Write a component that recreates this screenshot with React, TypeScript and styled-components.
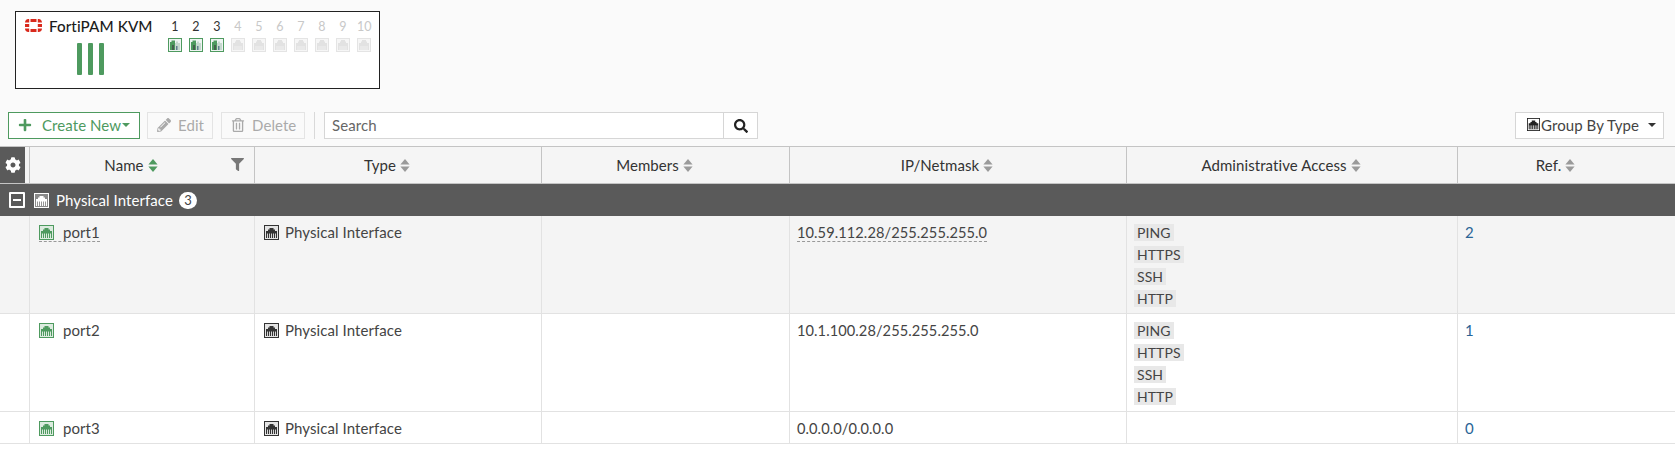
import { createGlobalStyle, styled } from 'styled-components';
import { FaCog, FaFilter, FaPencilAlt, FaPlus, FaSearch, FaRegTrashAlt } from 'react-icons/fa';

const GREEN = '#4e9a5f';

const GlobalStyle = createGlobalStyle`
  html, body {
    margin: 0;
    padding: 0;
    background: #fafafa;
    font-family: Lato, "Open Sans", sans-serif;
    font-size: 15px;
    letter-spacing: 0.08px;
    color: #444;
  }
`;

// rj45 jack in a square frame, frame and inner colours differ per place of use
const PortIcon = ({
  frame,
  fill = '#e4e4e4',
  jack,
  stripe = '#fff',
  size = 15,
}: {
  frame: string;
  fill?: string;
  jack: string;
  stripe?: string;
  size?: number;
}) => (
  <svg width={size} height={size} viewBox="0 0 15 15" style={{ flex: 'none', display: 'block' }}>
    <rect x="0.5" y="0.5" width="14" height="14" fill={fill} stroke={frame} />
    <path d="M2 13V6h2V4.5h1.5V3h4v1.5H11V6h2v7z" fill={jack} />
    <path d="M3.5 8.5V13M5.5 8.5V13M7.5 8.5V13M9.5 8.5V13M11.5 8.5V13" stroke={stripe} strokeWidth="0.8" />
  </svg>
);

const SwitchPort = ({ active }: { active: boolean }) => (
  <svg width="14" height="14" viewBox="0 0 14 14" style={{ display: 'block' }}>
    <rect x="0.5" y="0.5" width="13" height="13" fill={active ? '#eef4f2' : '#f6f6f6'} stroke={active ? GREEN : '#e4e4e4'} />
    {active ? (
      <>
        <path d="M2 12V4h1.5V2.5H7V12z" fill={GREEN} />
        <path d="M4 12V7h2v5z" fill="#44604c" />
        <path d="M7 12V5h1V3.5h2V5h2v7z" fill="#c6d8cf" />
        <path d="M8 12V8h1.5v4z" fill="#5f7f8c" />
      </>
    ) : (
      <>
        <path d="M2 12V5h2V3.5h1V2h4v1.5h1V5h2v7z" fill="#e2e2e2" />
        <path d="M4 8v4M6 8v4M8 8v4M10 8v4" stroke="#f6f6f6" strokeWidth="0.7" />
      </>
    )}
  </svg>
);

const FortinetLogo = () => (
  <svg width="17" height="13" viewBox="0 0 17 13" style={{ display: 'block', flex: 'none' }}>
    <g fill="#d9291c">
      <path d="M5.5 0h6v3h-6zM5.5 10h6v3h-6zM0 5h4.2v3H0zM12.8 5H17v3h-4.2z" />
      <path d="M0 3.6C0 1.5 1.4 0 3.4 0h.8v3.6zM17 3.6C17 1.5 15.6 0 13.6 0h-.8v3.6zM0 9.4C0 11.5 1.4 13 3.4 13h.8V9.4zM17 9.4c0 2.1-1.4 3.6-3.4 3.6h-.8V9.4z" />
    </g>
  </svg>
);

const SortIcon = ({ active }: { active?: boolean }) => (
  <svg width="10" height="13" viewBox="0 0 10 13" style={{ flex: 'none' }}>
    <path d="M5 0l4.6 5.4H.4z" fill={active ? GREEN : '#9a9a9a'} />
    <path d="M5 13L.4 7.6h9.2z" fill={active ? GREEN : '#9a9a9a'} />
  </svg>
);

const Page = styled.div`
  display: flex;
  flex-direction: column;
  width: 1675px;
  height: 450px;
  overflow: hidden;
  background: #fafafa;
`;

const Widget = styled.section`
  box-sizing: border-box;
  flex: none;
  display: flex;
  width: 365px;
  height: 78px;
  margin: 11px 0 0 15px;
  padding: 5px 0 0 9px;
  background: #fff;
  border: 1px solid #222;
`;

const WidgetLeft = styled.div`
  width: 143px;
`;

const WidgetTitle = styled.div`
  display: flex;
  align-items: center;
  gap: 7px;
  height: 17px;
  font-size: 15.2px;
  font-weight: 500;
  color: #1c1c1c;
  white-space: nowrap;
`;

const Bars = styled.div`
  display: flex;
  gap: 6px;
  margin: 9px 0 0 52px;
`;

const Bar = styled.div`
  width: 5px;
  height: 32px;
  border-radius: 1px;
  background: ${GREEN};
`;

const PortGrid = styled.div`
  display: grid;
  grid-template-columns: repeat(10, 14px);
  align-content: start;
  column-gap: 7px;
  row-gap: 4px;
  padding-top: 3px;
`;

const PortNumber = styled.div<{ $active: boolean }>`
  height: 14px;
  line-height: 14px;
  font-size: 12.5px;
  text-align: center;
  white-space: nowrap;
  color: ${p => (p.$active ? '#333' : '#c8c8c8')};
`;

const Toolbar = styled.div`
  flex: none;
  display: flex;
  align-items: stretch;
  height: 27px;
  margin: 23px 0 0 8px;
  padding-right: 11px;
`;

const ToolButton = styled.button<{ $width: number; $after?: number; $primary?: boolean }>`
  box-sizing: border-box;
  display: flex;
  align-items: center;
  gap: 7px;
  width: ${p => p.$width}px;
  height: 27px;
  margin-right: ${p => p.$after ?? 7}px;
  padding: 0 9px 2px;
  border: 1px solid ${p => (p.$primary ? GREEN : '#e4e4e4')};
  background: ${p => (p.$primary ? '#fff' : '#fafafa')};
  color: ${p => (p.$primary ? GREEN : '#aaa')};
  font-family: inherit;
  font-size: 15px;
  letter-spacing: inherit;
  white-space: nowrap;
`;

const Caret = styled.span`
  display: inline-block;
  flex: none;
  width: 0;
  height: 0;
  border-left: 4px solid transparent;
  border-right: 4px solid transparent;
  border-top: 4px solid currentColor;
`;

const CreateCaret = styled(Caret)`
  margin-left: -6px;
`;

const Separator = styled.div`
  width: 1px;
  margin: 0 9px 0 2px;
  background: #d9d9d9;
`;

const SearchBox = styled.div`
  box-sizing: border-box;
  display: flex;
  width: 434px;
  height: 27px;
  background: #fff;
  border: 1px solid #d6d6d6;
`;

const SearchInput = styled.div`
  flex: 1;
  padding-left: 7px;
  line-height: 25px;
  color: #666;
`;

const SearchButton = styled.div`
  display: flex;
  align-items: center;
  justify-content: center;
  width: 33px;
  border-left: 1px solid #d6d6d6;
  color: #222;
  font-size: 14px;
`;

const GroupBy = styled.div`
  box-sizing: border-box;
  display: flex;
  align-items: center;
  gap: 1px;
  width: 149px;
  height: 27px;
  margin-left: auto;
  padding: 0 0 2px 11px;
  background: #fff;
  border: 1px solid #d6d6d6;
  color: #444;
  white-space: nowrap;
`;

const GroupCaret = styled(Caret)`
  margin-left: 8px;
  color: #333;
`;

const Table = styled.div`
  flex: 1;
  margin-top: 7px;
  background: #fff;
  border-top: 1px solid #c4c4c4;
`;

const cols = '25px 4px 225px 287px 248px 337px 331px 1fr';

const HeaderRow = styled.div`
  box-sizing: border-box;
  display: grid;
  grid-template-columns: ${cols};
  height: 37px;
  background: #f5f5f5;
  border-bottom: 1px solid #c4c4c4;
`;

const GearCell = styled.div`
  display: flex;
  align-items: center;
  justify-content: center;
  background: #5a5a5a;
  color: #fff;
  font-size: 16px;
`;

const GapCell = styled.div`
  border-left: 1px solid transparent;
`;

const HeaderCell = styled.div`
  position: relative;
  box-sizing: border-box;
  display: flex;
  align-items: center;
  justify-content: center;
  gap: 4px;
  padding-right: 22px;
  border-left: 1px solid #c4c4c4;
  color: #333;
`;

const FilterIcon = styled.span`
  position: absolute;
  top: 11px;
  right: 10px;
  display: flex;
  color: #777;
  font-size: 13px;
`;

const GroupRow = styled.div`
  display: flex;
  align-items: center;
  height: 32px;
  padding-left: 9px;
  background: #5a5a5a;
  color: #fff;
`;

const Collapse = styled.span`
  box-sizing: border-box;
  display: flex;
  align-items: center;
  justify-content: center;
  width: 16px;
  height: 16px;
  margin-right: 9px;
  border: 2px solid #fff;
  border-radius: 1px;
  &::after {
    content: '';
    width: 8px;
    height: 2px;
    background: #fff;
  }
`;

const GroupLabel = styled.span`
  margin: 0 6px 0 7px;
`;

const CountBadge = styled.span`
  width: 18px;
  height: 17px;
  line-height: 17px;
  border-radius: 9px;
  background: #fff;
  color: #444;
  font-size: 13px;
  text-align: center;
`;

const Row = styled.div<{ $height: number; $selected?: boolean }>`
  box-sizing: border-box;
  display: grid;
  grid-template-columns: ${cols};
  height: ${p => p.$height}px;
  background: ${p => (p.$selected ? '#f4f4f4' : '#fff')};
  border-bottom: 1px solid #e2e2e2;
`;

const Cell = styled.div<{ $text?: boolean }>`
  box-sizing: border-box;
  padding: 8px 0 0 ${p => (p.$text ? 7 : 9)}px;
  border-left: 1px solid #e2e2e2;
  color: #444;
  line-height: 17px;
`;

const EmptyCell = styled.div``;

const CellLine = styled.span<{ $dashed?: boolean }>`
  display: inline-flex;
  align-items: center;
  gap: 9px;
  ${p => (p.$dashed ? 'border-bottom: 1px dashed #999;' : '')}
`;

const IpLine = styled(CellLine)`
  font-size: 14.6px;
`;

const TypeLine = styled.span`
  display: flex;
  align-items: center;
  gap: 6px;
`;

const Tags = styled.div`
  display: flex;
  flex-direction: column;
  align-items: flex-start;
  gap: 5px;
`;

const Tag = styled.span`
  padding: 0 3px;
  background: #e8e8e8;
  color: #444;
  font-size: 14px;
  line-height: 17px;
`;

const RefLink = styled.span`
  color: #2a6496;
`;

const headers = ['Type', 'Members', 'IP/Netmask', 'Administrative Access', 'Ref.'];
const ports = [
  { name: 'port1', ip: '10.59.112.28/255.255.255.0', refs: 2, height: 98, selected: true, tags: true },
  { name: 'port2', ip: '10.1.100.28/255.255.255.0', refs: 1, height: 98, tags: true },
  { name: 'port3', ip: '0.0.0.0/0.0.0.0', refs: 0, height: 32 },
];

export default function App() {
  return (
    <Page>
      <GlobalStyle />
      <Widget>
        <WidgetLeft>
          <WidgetTitle>
            <FortinetLogo />
            FortiPAM KVM
          </WidgetTitle>
          <Bars>
            <Bar />
            <Bar />
            <Bar />
          </Bars>
        </WidgetLeft>
        <PortGrid>
          {Array.from({ length: 10 }, (_, i) => (
            <PortNumber key={i} $active={i < 3}>
              {i + 1}
            </PortNumber>
          ))}
          {Array.from({ length: 10 }, (_, i) => (
            <SwitchPort key={i} active={i < 3} />
          ))}
        </PortGrid>
      </Widget>

      <Toolbar>
        <ToolButton $width={132} $primary>
          <FaPlus size={14} style={{ flex: 'none', marginRight: 3 }} />
          <span>Create New</span>
          <CreateCaret />
        </ToolButton>
        <ToolButton $width={66} $after={8}>
          <FaPencilAlt size={14} style={{ flex: 'none' }} />
          Edit
        </ToolButton>
        <ToolButton $width={84}>
          <FaRegTrashAlt size={14} style={{ flex: 'none' }} />
          Delete
        </ToolButton>
        <Separator />
        <SearchBox>
          <SearchInput>Search</SearchInput>
          <SearchButton>
            <FaSearch />
          </SearchButton>
        </SearchBox>
        <GroupBy>
          <PortIcon frame="#222" fill="#fff" jack="#222" size={13} />
          Group By Type
          <GroupCaret />
        </GroupBy>
      </Toolbar>

      <Table>
        <HeaderRow>
          <GearCell>
            <FaCog />
          </GearCell>
          <GapCell />
          <HeaderCell>
            Name <SortIcon active />
            <FilterIcon>
              <FaFilter />
            </FilterIcon>
          </HeaderCell>
          {headers.map(h => (
            <HeaderCell key={h}>
              {h} <SortIcon />
            </HeaderCell>
          ))}
        </HeaderRow>
        <GroupRow>
          <Collapse />
          <PortIcon frame="#fff" fill="#8a8a8a" jack="#fff" stripe="#7a7a7a" />
          <GroupLabel>Physical Interface</GroupLabel>
          <CountBadge>3</CountBadge>
        </GroupRow>
        {ports.map(p => (
          <Row key={p.name} $height={p.height} $selected={p.selected}>
            <EmptyCell />
            <EmptyCell />
            <Cell>
              <CellLine $dashed={p.selected}>
                <PortIcon frame={GREEN} fill="#dcebdf" jack={GREEN} />
                {p.name}
              </CellLine>
            </Cell>
            <Cell>
              <TypeLine>
                <PortIcon frame="#333" fill="#e4e4e4" jack="#333" />
                Physical Interface
              </TypeLine>
            </Cell>
            <Cell />
            <Cell $text>
              <IpLine $dashed={p.selected}>{p.ip}</IpLine>
            </Cell>
            <Cell $text>
              {p.tags && (
                <Tags>
                  <Tag>PING</Tag>
                  <Tag>HTTPS</Tag>
                  <Tag>SSH</Tag>
                  <Tag>HTTP</Tag>
                </Tags>
              )}
            </Cell>
            <Cell $text>
              <RefLink>{p.refs}</RefLink>
            </Cell>
          </Row>
        ))}
      </Table>
    </Page>
  );
}
